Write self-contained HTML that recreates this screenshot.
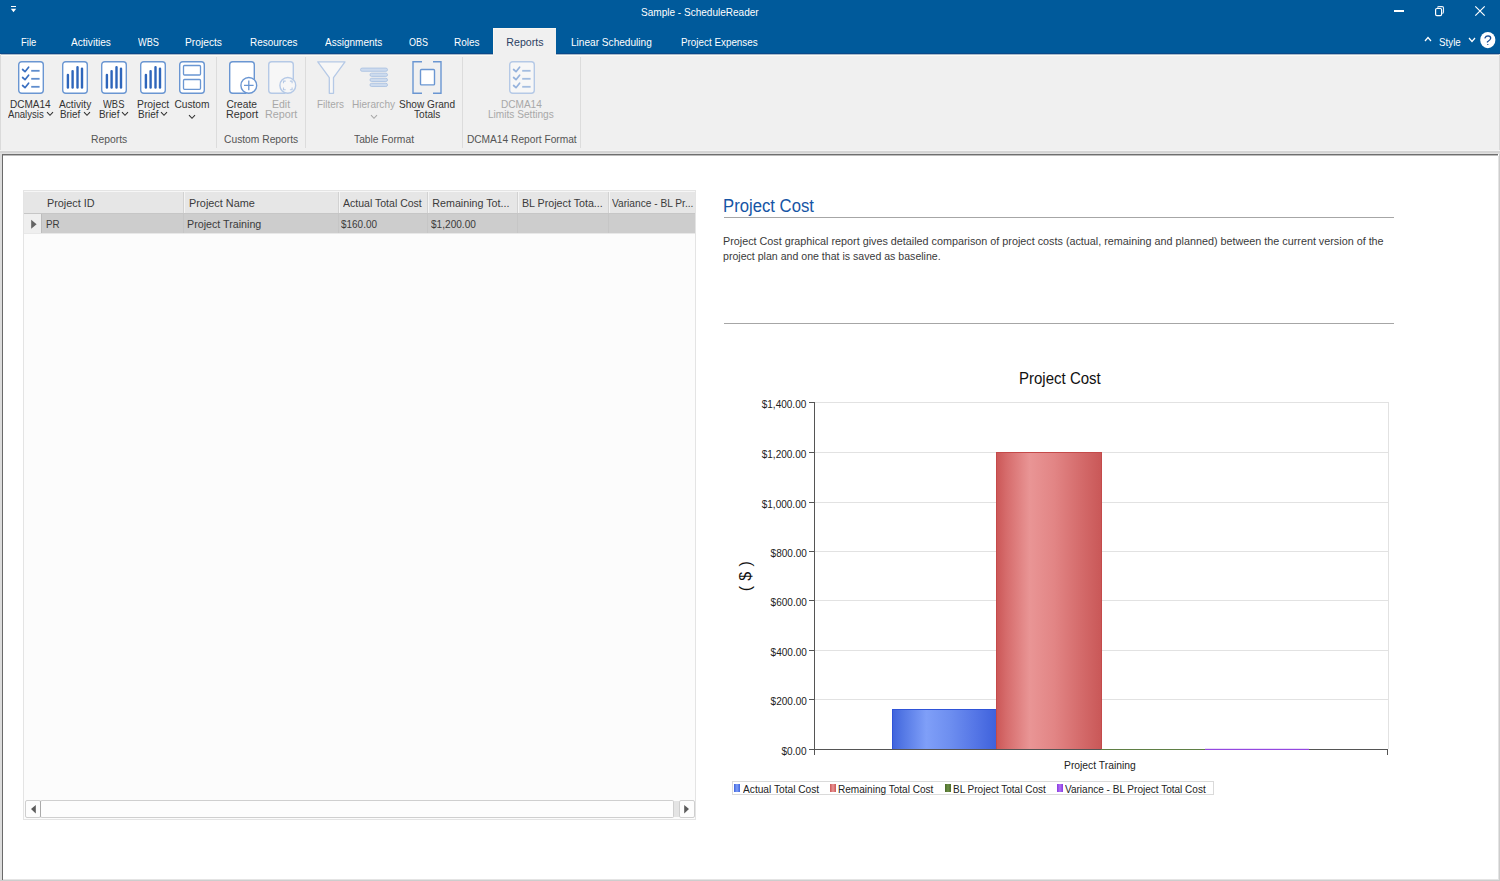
<!DOCTYPE html>
<html><head><meta charset="utf-8"><style>
html,body{margin:0;padding:0;width:1500px;height:881px;overflow:hidden;background:#fff;font-family:"Liberation Sans", sans-serif;}
.r{position:absolute;}
.t{position:absolute;white-space:nowrap;line-height:1;}
</style></head><body>
<div class="r" style="left:0px;top:0px;width:1500px;height:53px;background:#005a9b"></div>
<div class="r" style="left:0px;top:53px;width:1500px;height:1px;background:#0a4a8a"></div>
<div class="r" style="left:11px;top:6px;width:5px;height:1px;background:#fff"></div>
<svg class="r" style="left:10px;top:8px;" width="7" height="5" viewBox="0 0 7 5"><path d="M0.8 0.8 L6.2 0.8 L3.5 4.3 Z" fill="#fff"/></svg>
<div class="t" style="left:641.08px;top:7.68px;font-size:10.3px;color:#fff;transform:scaleX(0.9745);transform-origin:left top;">Sample - ScheduleReader</div>
<div class="r" style="left:1394px;top:10px;width:9.5px;height:1.7px;background:#fff"></div>
<svg class="r" style="left:1434px;top:5px;" width="12" height="12" viewBox="0 0 12 12"><rect x="1.6" y="3.5" width="6" height="7.1" rx="1.3" fill="none" stroke="#fff" stroke-width="1.2"/><path d="M3.5 2.6 Q3.8 1.6 4.9 1.6 H8.3 Q9.5 1.6 9.5 2.8 V6.8 Q9.5 8.2 8.4 8.6" fill="none" stroke="#e8eef6" stroke-width="1.1"/></svg>
<svg class="r" style="left:1474px;top:5px;" width="12" height="12" viewBox="0 0 12 12"><path d="M1.3 1.3 L10.7 10.7 M10.7 1.3 L1.3 10.7" stroke="#fff" stroke-width="1.2"/></svg>
<div class="r" style="left:493px;top:28px;width:63px;height:28px;background:#f0f0f0;border-left:1px solid #fbf7f0;border-top:1px solid #fbf7f0;box-sizing:border-box"></div>
<div class="t" style="left:20.86px;top:36.53px;font-size:10.6px;color:#fff;transform:scaleX(0.8959);transform-origin:left top;">File</div>
<div class="t" style="left:71.36px;top:36.53px;font-size:10.6px;color:#fff;transform:scaleX(0.9546);transform-origin:left top;">Activities</div>
<div class="t" style="left:137.76px;top:36.53px;font-size:10.6px;color:#fff;transform:scaleX(0.8699);transform-origin:left top;">WBS</div>
<div class="t" style="left:184.96px;top:36.53px;font-size:10.6px;color:#fff;transform:scaleX(0.9665);transform-origin:left top;">Projects</div>
<div class="t" style="left:249.76px;top:36.53px;font-size:10.6px;color:#fff;transform:scaleX(0.9360);transform-origin:left top;">Resources</div>
<div class="t" style="left:324.66px;top:36.53px;font-size:10.6px;color:#fff;transform:scaleX(0.9447);transform-origin:left top;">Assignments</div>
<div class="t" style="left:409.36px;top:36.53px;font-size:10.6px;color:#fff;transform:scaleX(0.8492);transform-origin:left top;">OBS</div>
<div class="t" style="left:454.06px;top:36.53px;font-size:10.6px;color:#fff;transform:scaleX(0.9449);transform-origin:left top;">Roles</div>
<div class="t" style="left:571.26px;top:36.53px;font-size:10.6px;color:#fff;transform:scaleX(0.9527);transform-origin:left top;">Linear Scheduling</div>
<div class="t" style="left:681.16px;top:36.53px;font-size:10.6px;color:#fff;transform:scaleX(0.9302);transform-origin:left top;">Project Expenses</div>
<div class="t" style="left:506.36px;top:36.53px;font-size:10.6px;color:#2b3f63;">Reports</div>
<svg class="r" style="left:1424px;top:36px;" width="8" height="6" viewBox="0 0 8 6"><path d="M1 5 L4 1.5 L7 5" fill="none" stroke="#fff" stroke-width="1.2"/></svg>
<div class="t" style="left:1438.56px;top:37.23px;font-size:10.6px;color:#fff;transform:scaleX(0.9252);transform-origin:left top;">Style</div>
<svg class="r" style="left:1468px;top:37px;" width="8" height="6" viewBox="0 0 8 6"><path d="M1 1 L4 4.5 L7 1" fill="none" stroke="#fff" stroke-width="1.2"/></svg>
<svg class="r" style="left:1480px;top:32px;" width="16" height="17" viewBox="0 0 16 17"><ellipse cx="7.8" cy="8.1" rx="7.6" ry="8.1" fill="#fff"/><path d="M5.0 5.9 Q5.8 3.9 8.0 3.9 Q10.7 4.0 10.7 6.3 Q10.6 7.9 7.3 10.0" fill="none" stroke="#154a92" stroke-width="1.3" stroke-linecap="round"/><rect x="7.1" y="12.0" width="1.3" height="1" fill="#3a6aa8"/></svg>
<div class="r" style="left:0px;top:54px;width:1500px;height:97px;background:#f0f0f0"></div>
<div class="r" style="left:0px;top:54px;width:493px;height:1px;background:#a9bbcc"></div>
<div class="r" style="left:556px;top:54px;width:944px;height:1px;background:#a9bbcc"></div>
<div class="r" style="left:0px;top:55px;width:493px;height:1px;background:#fdfcf6"></div>
<div class="r" style="left:556px;top:55px;width:944px;height:1px;background:#fdfcf6"></div>
<div class="r" style="left:0px;top:54px;width:1px;height:97px;background:#dadada"></div>
<div class="r" style="left:1499px;top:54px;width:1px;height:97px;background:#dadada"></div>
<div class="r" style="left:0px;top:150px;width:1500px;height:1px;background:#f4f4f4"></div>
<div class="r" style="left:0px;top:151px;width:1500px;height:2px;background:#d5d5d5"></div>
<div class="r" style="left:0px;top:153px;width:1500px;height:1px;background:#e1e1e1"></div>
<div class="r" style="left:216px;top:57px;width:1px;height:91px;background:#dcdcdc"></div>
<div class="r" style="left:305px;top:57px;width:1px;height:91px;background:#dcdcdc"></div>
<div class="r" style="left:462px;top:57px;width:1px;height:91px;background:#dcdcdc"></div>
<div class="r" style="left:580px;top:57px;width:1px;height:91px;background:#dcdcdc"></div>
<svg class="r" style="left:18px;top:61px;" width="26" height="33" viewBox="0 0 26 33"><rect x="0.7" y="0.7" width="24.6" height="31.6" rx="3" fill="#fff" stroke="#6a96d2" stroke-width="1.4"/><path d="M4.6 8.5 L7 10.7 L10.6 6.2" fill="none" stroke="#3a6fc0" stroke-width="1.7" stroke-linecap="round" stroke-linejoin="round"/><path d="M13.2 9.8 H21.6" stroke="#5f8dcd" stroke-width="1.8"/><path d="M4.6 16.5 L7 18.7 L10.6 14.2" fill="none" stroke="#3a6fc0" stroke-width="1.7" stroke-linecap="round" stroke-linejoin="round"/><path d="M13.2 17.8 H21.6" stroke="#5f8dcd" stroke-width="1.8"/><path d="M4.6 24.5 L7 26.7 L10.6 22.2" fill="none" stroke="#3a6fc0" stroke-width="1.7" stroke-linecap="round" stroke-linejoin="round"/><path d="M13.2 25.8 H21.6" stroke="#5f8dcd" stroke-width="1.8"/></svg>
<svg class="r" style="left:62px;top:61px;" width="26" height="33" viewBox="0 0 26 33"><rect x="0.7" y="0.7" width="24.6" height="31.6" rx="3" fill="#fff" stroke="#6a96d2" stroke-width="1.4"/><path d="M5.9 14.0 V26.6" stroke="#2f66bb" stroke-width="2.4" stroke-linecap="round"/><path d="M10.6 10.1 V26.6" stroke="#2f66bb" stroke-width="2.4" stroke-linecap="round"/><path d="M15.5 6.1 V26.6" stroke="#2f66bb" stroke-width="2.4" stroke-linecap="round"/><path d="M20 7.8 V26.6" stroke="#2f66bb" stroke-width="2.4" stroke-linecap="round"/></svg>
<svg class="r" style="left:101px;top:61px;" width="26" height="33" viewBox="0 0 26 33"><rect x="0.7" y="0.7" width="24.6" height="31.6" rx="3" fill="#fff" stroke="#6a96d2" stroke-width="1.4"/><path d="M5.9 14.0 V26.6" stroke="#2f66bb" stroke-width="2.4" stroke-linecap="round"/><path d="M10.6 10.1 V26.6" stroke="#2f66bb" stroke-width="2.4" stroke-linecap="round"/><path d="M15.5 6.1 V26.6" stroke="#2f66bb" stroke-width="2.4" stroke-linecap="round"/><path d="M20 7.8 V26.6" stroke="#2f66bb" stroke-width="2.4" stroke-linecap="round"/></svg>
<svg class="r" style="left:140px;top:61px;" width="26" height="33" viewBox="0 0 26 33"><rect x="0.7" y="0.7" width="24.6" height="31.6" rx="3" fill="#fff" stroke="#6a96d2" stroke-width="1.4"/><path d="M5.9 14.0 V26.6" stroke="#2f66bb" stroke-width="2.4" stroke-linecap="round"/><path d="M10.6 10.1 V26.6" stroke="#2f66bb" stroke-width="2.4" stroke-linecap="round"/><path d="M15.5 6.1 V26.6" stroke="#2f66bb" stroke-width="2.4" stroke-linecap="round"/><path d="M20 7.8 V26.6" stroke="#2f66bb" stroke-width="2.4" stroke-linecap="round"/></svg>
<svg class="r" style="left:179px;top:61px;" width="26" height="33" viewBox="0 0 26 33"><rect x="0.7" y="0.7" width="24.6" height="31.6" rx="3" fill="#fff" stroke="#6a96d2" stroke-width="1.4"/><rect x="4.5" y="4.5" width="17" height="9.5" rx="1" fill="none" stroke="#6a96d2" stroke-width="1.3"/><rect x="4.5" y="18.5" width="17" height="9.8" rx="1" fill="none" stroke="#6a96d2" stroke-width="1.3"/></svg>
<svg class="r" style="left:229px;top:61px;" width="30" height="34" viewBox="0 0 30 34"><rect x="0.7" y="0.7" width="24.6" height="31.6" rx="3" fill="#fff"/><path d="M25.3 18.2 V3.7 Q25.3 0.7 22.3 0.7 H3.7 Q0.7 0.7 0.7 3.7 V29.3 Q0.7 32.3 3.7 32.3 H17.3" fill="none" stroke="#6a96d2" stroke-width="1.4"/><circle cx="19.8" cy="24.4" r="7.9" fill="#fff" stroke="#6a96d2" stroke-width="1.4"/><path d="M19.8 19.6 V29.2 M15 24.4 H24.6" stroke="#6a96d2" stroke-width="1.3"/></svg>
<svg class="r" style="left:268px;top:61px;" width="30" height="34" viewBox="0 0 30 34"><rect x="0.7" y="0.7" width="24.6" height="31.6" rx="3" fill="#f7f7f7"/><path d="M25.3 18.2 V3.7 Q25.3 0.7 22.3 0.7 H3.7 Q0.7 0.7 0.7 3.7 V29.3 Q0.7 32.3 3.7 32.3 H17.3" fill="none" stroke="#b5c9e6" stroke-width="1.4"/><circle cx="19.8" cy="24.4" r="7.9" fill="#f7f7f7" stroke="#b5c9e6" stroke-width="1.4"/><path d="M15.5 22.3 V20.1 H17.7 M21.9 20.1 H24.1 V22.3 M24.1 26.5 V28.7 H21.9 M17.7 28.7 H15.5 V26.5" fill="none" stroke="#b5c9e6" stroke-width="1.1"/></svg>
<svg class="r" style="left:317px;top:61px;" width="29" height="34" viewBox="0 0 29 34"><path d="M0.8 0.8 H28 L16.5 16.6 V32.3 H12.3 V16.6 Z" fill="#f7f7f7" stroke="#b5c9e6" stroke-width="1.3" stroke-linejoin="round"/></svg>
<svg class="r" style="left:359px;top:61px;" width="31" height="34" viewBox="0 0 31 34"><rect x="1.5" y="7.1" width="27.0" height="3.2" rx="1.6" fill="#cddbee" stroke="#adc3e2" stroke-width="0.9"/><rect x="11" y="12.200000000000001" width="17.5" height="3.2" rx="1.6" fill="#cddbee" stroke="#adc3e2" stroke-width="0.9"/><rect x="11" y="17.299999999999997" width="17.5" height="3.2" rx="1.6" fill="#cddbee" stroke="#adc3e2" stroke-width="0.9"/><rect x="11" y="22.299999999999997" width="17.5" height="3.2" rx="1.6" fill="#cddbee" stroke="#adc3e2" stroke-width="0.9"/></svg>
<svg class="r" style="left:412px;top:61px;" width="31" height="34" viewBox="0 0 31 34"><path d="M10 0.8 H1 V32.3 H10 M21 0.8 H29 V32.3 H21" fill="none" stroke="#6a96d2" stroke-width="1.4"/><rect x="8.5" y="8.5" width="14" height="15.4" rx="1" fill="#fff" stroke="#6a96d2" stroke-width="1.4"/></svg>
<svg class="r" style="left:509px;top:61px;" width="26" height="33" viewBox="0 0 26 33"><rect x="0.7" y="0.7" width="24.6" height="31.6" rx="3" fill="#f7f7f7" stroke="#b5c9e6" stroke-width="1.4"/><path d="M4.6 8.5 L7 10.7 L10.6 6.2" fill="none" stroke="#95b2dc" stroke-width="1.7" stroke-linecap="round" stroke-linejoin="round"/><path d="M13.2 9.8 H21.6" stroke="#a4bde0" stroke-width="1.8"/><path d="M4.6 16.5 L7 18.7 L10.6 14.2" fill="none" stroke="#95b2dc" stroke-width="1.7" stroke-linecap="round" stroke-linejoin="round"/><path d="M13.2 17.8 H21.6" stroke="#a4bde0" stroke-width="1.8"/><path d="M4.6 24.5 L7 26.7 L10.6 22.2" fill="none" stroke="#95b2dc" stroke-width="1.7" stroke-linecap="round" stroke-linejoin="round"/><path d="M13.2 25.8 H21.6" stroke="#a4bde0" stroke-width="1.8"/></svg>
<div class="t" style="left:10.19px;top:100.27px;font-size:10.2px;color:#333333;transform:scaleX(0.9848);transform-origin:left top;">DCMA14</div>
<div class="t" style="left:8.39px;top:110.37px;font-size:10.2px;color:#333333;transform:scaleX(0.9410);transform-origin:left top;">Analysis</div>
<div class="t" style="left:58.99px;top:100.27px;font-size:10.2px;color:#333333;">Activity</div>
<div class="t" style="left:60.09px;top:110.37px;font-size:10.2px;color:#333333;transform:scaleX(0.9688);transform-origin:left top;">Brief</div>
<div class="t" style="left:102.99px;top:100.27px;font-size:10.2px;color:#333333;transform:scaleX(0.9217);transform-origin:left top;">WBS</div>
<div class="t" style="left:98.99px;top:110.37px;font-size:10.2px;color:#333333;transform:scaleX(0.9736);transform-origin:left top;">Brief</div>
<div class="t" style="left:137.09px;top:100.27px;font-size:10.2px;color:#333333;transform:scaleX(1.0152);transform-origin:left top;">Project</div>
<div class="t" style="left:137.89px;top:110.37px;font-size:10.2px;color:#333333;transform:scaleX(0.9784);transform-origin:left top;">Brief</div>
<div class="t" style="left:174.39px;top:100.27px;font-size:10.2px;color:#333333;">Custom</div>
<div class="t" style="left:226.39px;top:100.27px;font-size:10.2px;color:#333333;">Create</div>
<div class="t" style="left:225.89px;top:110.37px;font-size:10.2px;color:#333333;transform:scaleX(1.0530);transform-origin:left top;">Report</div>
<div class="t" style="left:271.79px;top:100.27px;font-size:10.2px;color:#a8a8a8;transform:scaleX(1.0306);transform-origin:left top;">Edit</div>
<div class="t" style="left:265.09px;top:110.37px;font-size:10.2px;color:#a8a8a8;transform:scaleX(1.0563);transform-origin:left top;">Report</div>
<div class="t" style="left:317.39px;top:100.27px;font-size:10.2px;color:#a8a8a8;transform:scaleX(0.9735);transform-origin:left top;">Filters</div>
<div class="t" style="left:352.19px;top:100.27px;font-size:10.2px;color:#a8a8a8;transform:scaleX(0.9864);transform-origin:left top;">Hierarchy</div>
<div class="t" style="left:398.69px;top:100.27px;font-size:10.2px;color:#333333;transform:scaleX(0.9905);transform-origin:left top;">Show Grand</div>
<div class="t" style="left:413.99px;top:110.37px;font-size:10.2px;color:#333333;transform:scaleX(0.9915);transform-origin:left top;">Totals</div>
<div class="t" style="left:500.89px;top:100.27px;font-size:10.2px;color:#a8a8a8;transform:scaleX(0.9872);transform-origin:left top;">DCMA14</div>
<div class="t" style="left:488.39px;top:110.37px;font-size:10.2px;color:#a8a8a8;transform:scaleX(0.9925);transform-origin:left top;">Limits Settings</div>
<svg class="r" style="left:45.5px;top:110.5px;" width="8" height="6" viewBox="0 0 8 6"><path d="M1 1.2 L4 4.3 L7 1.2" fill="none" stroke="#333333" stroke-width="1.1"/></svg>
<svg class="r" style="left:82.5px;top:110.5px;" width="8" height="6" viewBox="0 0 8 6"><path d="M1 1.2 L4 4.3 L7 1.2" fill="none" stroke="#333333" stroke-width="1.1"/></svg>
<svg class="r" style="left:121px;top:110.5px;" width="8" height="6" viewBox="0 0 8 6"><path d="M1 1.2 L4 4.3 L7 1.2" fill="none" stroke="#333333" stroke-width="1.1"/></svg>
<svg class="r" style="left:160px;top:110.5px;" width="8" height="6" viewBox="0 0 8 6"><path d="M1 1.2 L4 4.3 L7 1.2" fill="none" stroke="#333333" stroke-width="1.1"/></svg>
<svg class="r" style="left:187.5px;top:114.3px;" width="8" height="6" viewBox="0 0 8 6"><path d="M1 1.2 L4 4.3 L7 1.2" fill="none" stroke="#333333" stroke-width="1.1"/></svg>
<svg class="r" style="left:369.5px;top:114.3px;" width="8" height="6" viewBox="0 0 8 6"><path d="M1 1.2 L4 4.3 L7 1.2" fill="none" stroke="#a8a8a8" stroke-width="1.1"/></svg>
<div class="t" style="left:91.09px;top:134.87px;font-size:10.2px;color:#555555;transform:scaleX(1.0148);transform-origin:left top;">Reports</div>
<div class="t" style="left:224.19px;top:134.87px;font-size:10.2px;color:#555555;transform:scaleX(1.0080);transform-origin:left top;">Custom Reports</div>
<div class="t" style="left:354.39px;top:134.87px;font-size:10.2px;color:#555555;transform:scaleX(1.0092);transform-origin:left top;">Table Format</div>
<div class="t" style="left:466.89px;top:134.87px;font-size:10.2px;color:#555555;">DCMA14 Report Format</div>
<div class="r" style="left:0px;top:154px;width:1500px;height:727px;background:#fff"></div>
<div class="r" style="left:0px;top:154px;width:2px;height:727px;background:#dcdcdc"></div>
<div class="r" style="left:2px;top:154px;width:1px;height:727px;background:#6a6a6a"></div>
<div class="r" style="left:2px;top:154px;width:1496px;height:1px;background:#6e6e6e"></div>
<div class="r" style="left:3px;top:155px;width:1495px;height:1px;background:#bdbdbd"></div>
<div class="r" style="left:1498px;top:156px;width:1px;height:724px;background:#e4e4e4"></div>
<div class="r" style="left:1499px;top:154px;width:1px;height:727px;background:#cdcdcd"></div>
<div class="r" style="left:3px;top:879px;width:1496px;height:1px;background:#e4e4e4"></div>
<div class="r" style="left:0px;top:880px;width:1500px;height:1px;background:#cdcdcd"></div>
<div class="r" style="left:23px;top:190px;width:673px;height:630px;background:#fcfcfc;border:1px solid #e4e4e4;box-sizing:border-box"></div>
<div class="r" style="left:24px;top:191px;width:671px;height:1px;background:#f6f6f6"></div>
<div class="r" style="left:24px;top:192px;width:671px;height:21px;background:#e6e6e6"></div>
<div class="r" style="left:24px;top:213px;width:671px;height:1px;background:#c6c6c6"></div>
<div class="r" style="left:183px;top:192px;width:1px;height:21px;background:#d2d2d2"></div>
<div class="r" style="left:184px;top:192px;width:1px;height:21px;background:#f4f4f4"></div>
<div class="r" style="left:338px;top:192px;width:1px;height:21px;background:#d2d2d2"></div>
<div class="r" style="left:339px;top:192px;width:1px;height:21px;background:#f4f4f4"></div>
<div class="r" style="left:427px;top:192px;width:1px;height:21px;background:#d2d2d2"></div>
<div class="r" style="left:428px;top:192px;width:1px;height:21px;background:#f4f4f4"></div>
<div class="r" style="left:517px;top:192px;width:1px;height:21px;background:#d2d2d2"></div>
<div class="r" style="left:518px;top:192px;width:1px;height:21px;background:#f4f4f4"></div>
<div class="r" style="left:608px;top:192px;width:1px;height:21px;background:#d2d2d2"></div>
<div class="r" style="left:609px;top:192px;width:1px;height:21px;background:#f4f4f4"></div>
<div class="r" style="left:24px;top:214px;width:17px;height:19px;background:#efefef"></div>
<div class="r" style="left:41px;top:214px;width:1px;height:19px;background:#bdbdbd"></div>
<div class="r" style="left:42px;top:214px;width:653px;height:19px;background:#cdcdcd"></div>
<div class="r" style="left:183px;top:214px;width:1px;height:19px;background:#c6c6c6"></div>
<div class="r" style="left:338px;top:214px;width:1px;height:19px;background:#c6c6c6"></div>
<div class="r" style="left:427px;top:214px;width:1px;height:19px;background:#c6c6c6"></div>
<div class="r" style="left:517px;top:214px;width:1px;height:19px;background:#c6c6c6"></div>
<div class="r" style="left:608px;top:214px;width:1px;height:19px;background:#c6c6c6"></div>
<div class="r" style="left:24px;top:233px;width:671px;height:1px;background:#e8e8e8"></div>
<svg class="r" style="left:30px;top:219px;" width="8" height="11" viewBox="0 0 8 11"><path d="M1.2 0.8 L6.6 5.2 L1.2 9.8 Z" fill="#646464"/></svg>
<div class="t" style="left:47.36px;top:197.74px;font-size:10.7px;color:#3b3b3b;transform:scaleX(1.0145);transform-origin:left top;">Project ID</div>
<div class="t" style="left:188.56px;top:197.74px;font-size:10.7px;color:#3b3b3b;transform:scaleX(1.0162);transform-origin:left top;">Project Name</div>
<div class="t" style="left:342.56px;top:197.74px;font-size:10.7px;color:#3b3b3b;transform:scaleX(0.9850);transform-origin:left top;">Actual Total Cost</div>
<div class="t" style="left:432.36px;top:197.74px;font-size:10.7px;color:#3b3b3b;">Remaining Tot...</div>
<div class="t" style="left:521.96px;top:197.74px;font-size:10.7px;color:#3b3b3b;">BL Project Tota...</div>
<div class="t" style="left:611.96px;top:197.74px;font-size:10.7px;color:#3b3b3b;transform:scaleX(0.9515);transform-origin:left top;">Variance - BL Pr...</div>
<div class="t" style="left:45.67px;top:218.91px;font-size:10.5px;color:#3b3b3b;transform:scaleX(0.9319);transform-origin:left top;">PR</div>
<div class="t" style="left:186.97px;top:218.91px;font-size:10.5px;color:#3b3b3b;transform:scaleX(1.0185);transform-origin:left top;">Project Training</div>
<div class="t" style="left:341.17px;top:218.91px;font-size:10.5px;color:#3b3b3b;transform:scaleX(0.9481);transform-origin:left top;">$160.00</div>
<div class="t" style="left:430.77px;top:218.91px;font-size:10.5px;color:#3b3b3b;transform:scaleX(0.9611);transform-origin:left top;">$1,200.00</div>
<div class="r" style="left:25px;top:800px;width:16px;height:18px;background:#fdfdfd;border:1px solid #cfcfcf;border-radius:2px;box-sizing:border-box"></div>
<div class="r" style="left:40px;top:800px;width:634px;height:18px;background:#fdfdfd;border:1px solid #cfcfcf;border-left-color:#a9a9a9;border-radius:2px;box-sizing:border-box"></div>
<div class="r" style="left:674px;top:801px;width:5px;height:16px;background:#e4e4e4"></div>
<div class="r" style="left:679px;top:800px;width:16px;height:18px;background:#fdfdfd;border:1px solid #cfcfcf;border-radius:2px;box-sizing:border-box"></div>
<svg class="r" style="left:30px;top:804px;" width="7" height="11" viewBox="0 0 7 11"><path d="M5.8 1 L1 5 L5.8 9.6 Z" fill="#5c5c5c"/></svg>
<svg class="r" style="left:683px;top:804px;" width="7" height="11" viewBox="0 0 7 11"><path d="M1.2 1 L6 5 L1.2 9.6 Z" fill="#5c5c5c"/></svg>
<div class="t" style="left:722.90px;top:197.21px;font-size:18.3px;color:#1655a5;transform:scaleX(0.9129);transform-origin:left top;">Project Cost</div>
<div class="r" style="left:724px;top:217px;width:670px;height:1px;background:#a6a6a6"></div>
<div class="t" style="left:723.32px;top:235.95px;font-size:11.4px;color:#3a3a3a;transform:scaleX(0.9468);transform-origin:left top;">Project Cost graphical report gives detailed comparison of project costs (actual, remaining and planned) between the current version of the</div>
<div class="t" style="left:723.32px;top:251.05px;font-size:11.4px;color:#3a3a3a;transform:scaleX(0.9291);transform-origin:left top;">project plan and one that is saved as baseline.</div>
<div class="r" style="left:724px;top:323px;width:670px;height:1px;background:#a6a6a6"></div>
<div class="t" style="left:1018.62px;top:370.10px;font-size:16.3px;color:#111;transform:scaleX(0.9223);transform-origin:left top;">Project Cost</div>
<div class="r" style="left:815px;top:699px;width:573px;height:1px;background:#e2e2e2"></div>
<div class="r" style="left:815px;top:650px;width:573px;height:1px;background:#e2e2e2"></div>
<div class="r" style="left:815px;top:600px;width:573px;height:1px;background:#e2e2e2"></div>
<div class="r" style="left:815px;top:551px;width:573px;height:1px;background:#e2e2e2"></div>
<div class="r" style="left:815px;top:502px;width:573px;height:1px;background:#e2e2e2"></div>
<div class="r" style="left:815px;top:452px;width:573px;height:1px;background:#e2e2e2"></div>
<div class="r" style="left:815px;top:402px;width:573px;height:1px;background:#e2e2e2"></div>
<div class="r" style="left:1388px;top:402px;width:1px;height:347px;background:#e2e2e2"></div>
<div class="r" style="left:892px;top:709px;width:104px;height:40px;background:linear-gradient(90deg,#3f63dc 0%,#5377e4 10%,#7f9ff8 33%,#6e8ff0 55%,#5576e6 80%,#3f62dc 100%);box-shadow:inset 1px 1px 0 #2f54d8"></div>
<div class="r" style="left:996px;top:452px;width:105.5px;height:298px;background:linear-gradient(90deg,#cb5656 0%,#d66c6c 10%,#e99595 32%,#e28585 55%,#d46b6b 80%,#c95757 100%);box-shadow:inset 1px 1px 0 #c44a4a, inset -1px 0 0 #c44a4a"></div>
<div class="r" style="left:814px;top:402px;width:1px;height:353px;background:#555"></div>
<div class="r" style="left:809px;top:749px;width:579px;height:1px;background:#555"></div>
<div class="r" style="left:1387px;top:749px;width:1px;height:6px;background:#555"></div>
<div class="r" style="left:1101px;top:749px;width:104px;height:1px;background:#5f7f45"></div>
<div class="r" style="left:1205px;top:748px;width:104px;height:1px;background:rgba(155,75,230,0.2)"></div>
<div class="r" style="left:1205px;top:749px;width:104px;height:1px;background:#9448e0"></div>
<div class="r" style="left:809px;top:749px;width:5px;height:1px;background:#555"></div>
<div class="r" style="left:809px;top:699px;width:5px;height:1px;background:#555"></div>
<div class="r" style="left:809px;top:650px;width:5px;height:1px;background:#555"></div>
<div class="r" style="left:809px;top:600px;width:5px;height:1px;background:#555"></div>
<div class="r" style="left:809px;top:551px;width:5px;height:1px;background:#555"></div>
<div class="r" style="left:809px;top:502px;width:5px;height:1px;background:#555"></div>
<div class="r" style="left:809px;top:452px;width:5px;height:1px;background:#555"></div>
<div class="r" style="left:809px;top:402px;width:5px;height:1px;background:#555"></div>
<div class="t" style="left:781.00px;top:746.87px;font-size:10.2px;color:#222;transform:scaleX(0.9850);transform-origin:right top;">$0.00</div>
<div class="t" style="left:769.67px;top:696.87px;font-size:10.2px;color:#222;transform:scaleX(0.9850);transform-origin:right top;">$200.00</div>
<div class="t" style="left:769.67px;top:647.87px;font-size:10.2px;color:#222;transform:scaleX(0.9850);transform-origin:right top;">$400.00</div>
<div class="t" style="left:769.67px;top:597.87px;font-size:10.2px;color:#222;transform:scaleX(0.9850);transform-origin:right top;">$600.00</div>
<div class="t" style="left:769.67px;top:548.87px;font-size:10.2px;color:#222;transform:scaleX(0.9850);transform-origin:right top;">$800.00</div>
<div class="t" style="left:761.17px;top:499.87px;font-size:10.2px;color:#222;transform:scaleX(0.9850);transform-origin:right top;">$1,000.00</div>
<div class="t" style="left:761.17px;top:449.87px;font-size:10.2px;color:#222;transform:scaleX(0.9850);transform-origin:right top;">$1,200.00</div>
<div class="t" style="left:761.17px;top:399.87px;font-size:10.2px;color:#222;transform:scaleX(0.9850);transform-origin:right top;">$1,400.00</div>
<div class="t" style="left:1064.37px;top:759.51px;font-size:10.5px;color:#222;transform:scaleX(0.9828);transform-origin:left top;">Project Training</div>
<div class="t" style="left:716px;top:567.3px;width:60px;height:18px;font-size:16px;line-height:18px;letter-spacing:0.4px;text-align:center;color:#111;transform:rotate(-90deg)">( $ )</div>
<div class="r" style="left:732px;top:781px;width:482px;height:14px;background:#fff;border:1px solid #dadada;box-sizing:border-box"></div>
<div class="r" style="left:734px;top:784px;width:6px;height:8px;background:linear-gradient(90deg,#3f63dc,#7f9ff8,#3f63dc)"></div>
<div class="r" style="left:830px;top:784px;width:6px;height:8px;background:linear-gradient(90deg,#cb5656,#e99595,#cb5656)"></div>
<div class="r" style="left:945px;top:784px;width:6px;height:8px;background:linear-gradient(90deg,#4a6a2a,#6c8f45,#4a6a2a)"></div>
<div class="r" style="left:1057px;top:784px;width:6px;height:8px;background:linear-gradient(90deg,#8a3ae0,#b070f5,#8a3ae0)"></div>
<div class="t" style="left:742.77px;top:784.31px;font-size:10.5px;color:#222;transform:scaleX(0.9694);transform-origin:left top;">Actual Total Cost</div>
<div class="t" style="left:837.97px;top:784.31px;font-size:10.5px;color:#222;transform:scaleX(0.9577);transform-origin:left top;">Remaining Total Cost</div>
<div class="t" style="left:952.67px;top:784.31px;font-size:10.5px;color:#222;transform:scaleX(0.9511);transform-origin:left top;">BL Project Total Cost</div>
<div class="t" style="left:1064.67px;top:784.31px;font-size:10.5px;color:#222;transform:scaleX(0.9541);transform-origin:left top;">Variance - BL Project Total Cost</div>
</body></html>
